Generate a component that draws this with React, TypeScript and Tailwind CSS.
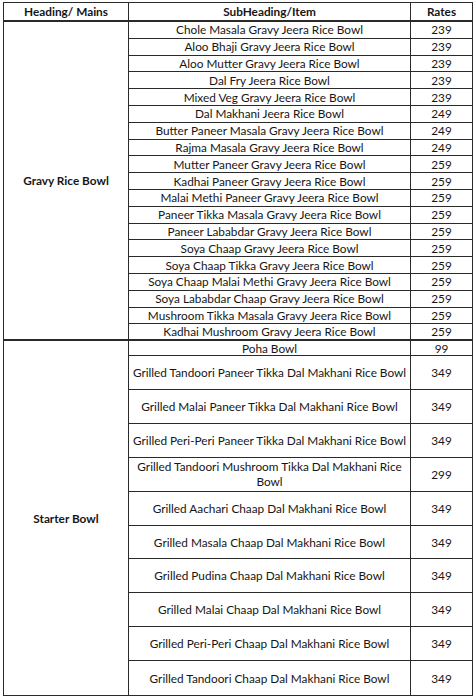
const gravy: [string, number][] = [
  ['Chole Masala Gravy Jeera Rice Bowl', 239],
  ['Aloo Bhaji Gravy Jeera Rice Bowl', 239],
  ['Aloo Mutter Gravy Jeera Rice Bowl', 239],
  ['Dal Fry Jeera Rice Bowl', 239],
  ['Mixed Veg Gravy Jeera Rice Bowl', 239],
  ['Dal Makhani Jeera Rice Bowl', 249],
  ['Butter Paneer Masala Gravy Jeera Rice Bowl', 249],
  ['Rajma Masala Gravy Jeera Rice Bowl', 249],
  ['Mutter Paneer Gravy Jeera Rice Bowl', 259],
  ['Kadhai Paneer Gravy Jeera Rice Bowl', 259],
  ['Malai Methi Paneer Gravy Jeera Rice Bowl', 259],
  ['Paneer Tikka Masala Gravy Jeera Rice Bowl', 259],
  ['Paneer Lababdar Gravy Jeera Rice Bowl', 259],
  ['Soya Chaap Gravy Jeera Rice Bowl', 259],
  ['Soya Chaap Tikka Gravy Jeera Rice Bowl', 259],
  ['Soya Chaap Malai Methi Gravy Jeera Rice Bowl', 259],
  ['Soya Lababdar Chaap Gravy Jeera Rice Bowl', 259],
  ['Mushroom Tikka Masala Gravy Jeera Rice Bowl', 259],
  ['Kadhai Mushroom Gravy Jeera Rice Bowl', 259],
];

const starter: [string, number][] = [
  ['Grilled Tandoori Paneer Tikka Dal Makhani Rice Bowl', 349],
  ['Grilled Malai Paneer Tikka Dal Makhani Rice Bowl', 349],
  ['Grilled Peri-Peri Paneer Tikka Dal Makhani Rice Bowl', 349],
  ['Grilled Tandoori Mushroom Tikka Dal Makhani Rice Bowl', 299],
  ['Grilled Aachari Chaap Dal Makhani Rice Bowl', 349],
  ['Grilled Masala Chaap Dal Makhani Rice Bowl', 349],
  ['Grilled Pudina Chaap Dal Makhani Rice Bowl', 349],
  ['Grilled Malai Chaap Dal Makhani Rice Bowl', 349],
  ['Grilled Peri-Peri Chaap Dal Makhani Rice Bowl', 349],
  ['Grilled Tandoori Chaap Dal Makhani Rice Bowl', 349],
];

export default function App() {
  return (
    <div className="bg-white w-[475px] h-[700px] pt-[2px] pl-[3px] text-[#161616] font-['Lato',sans-serif] text-[11.8px] leading-[13px]">
      <div className="w-[470px] border border-[#2a2a2a] grid grid-cols-[125px_282px_1fr]">
        {/* Header */}
        <div className="h-[19px] border-r border-b-2 border-[#2a2a2a] flex items-center justify-center font-bold">
          Heading/ Mains
        </div>
        <div className="h-[19px] border-r border-b-2 border-[#2a2a2a] flex items-center justify-center font-bold">
          SubHeading/Item
        </div>
        <div className="h-[19px] border-b-2 border-[#2a2a2a] flex items-center justify-center font-bold">
          Rates
        </div>

        {/* Gravy Rice Bowl */}
        <div className="row-span-19 border-r border-b-2 border-[#2a2a2a] flex items-center justify-center font-bold">
          Gravy Rice Bowl
        </div>
        {gravy.map(([name, rate], i) => {
          const last = i === gravy.length - 1;
          return (
            <div key={name} className="contents">
              <div
                className={`h-[16.8px] border-r border-[#2a2a2a] flex items-center justify-center ${last ? 'border-b-2' : 'border-b'}`}
              >
                {name}
              </div>
              <div
                className={`h-[16.8px] border-[#2a2a2a] flex items-center justify-center ${last ? 'border-b-2' : 'border-b'}`}
              >
                {rate}
              </div>
            </div>
          );
        })}

        {/* Starter Bowl */}
        <div className="row-span-11 border-r border-[#2a2a2a] flex items-center justify-center font-bold">
          Starter Bowl
        </div>
        <div className="h-[15px] border-r border-b border-[#2a2a2a] flex items-center justify-center">
          Poha Bowl
        </div>
        <div className="h-[15px] border-b border-[#2a2a2a] flex items-center justify-center">99</div>
        {starter.map(([name, rate], i) => {
          const last = i === starter.length - 1;
          return (
            <div key={name} className="contents">
              <div
                className={`h-[33.9px] px-[2px] leading-[15px] border-r border-[#2a2a2a] flex items-center justify-center text-center ${last ? '' : 'border-b'}`}
              >
                {name}
              </div>
              <div
                className={`h-[33.9px] border-[#2a2a2a] flex items-center justify-center ${last ? '' : 'border-b'}`}
              >
                {rate}
              </div>
            </div>
          );
        })}
      </div>
    </div>
  );
}
